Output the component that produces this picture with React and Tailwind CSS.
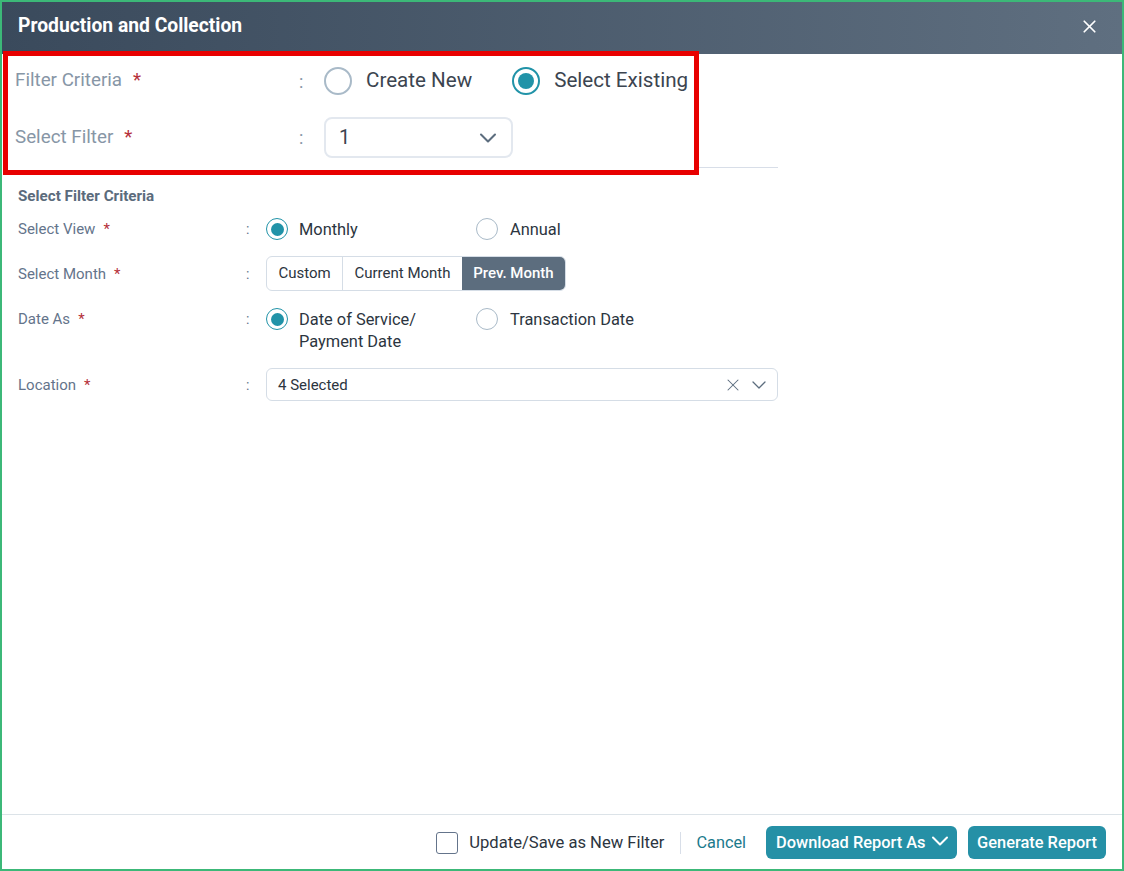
import React from 'react';
import { X, ChevronDown } from 'lucide-react';

const Radio = ({ checked, large }) => (
    <span
        className={`flex shrink-0 items-center justify-center rounded-full bg-white ${large ? 'h-[28px] w-[28px] border-2' : 'h-[22px] w-[22px] border-[1.5px]'} ${checked ? 'border-[#2193a8]' : 'border-[#a9bac8]'}`}
    >
        {checked && <span className={`rounded-full bg-[#2193a8] ${large ? 'h-[16px] w-[16px]' : 'h-[13px] w-[13px]'}`} />}
    </span>
);

const Required = ({ label, className, gap = 'ml-2' }) => (
    <span className={className}>
        {label}
        <span className={`${gap} text-[#b5303a]`}>*</span>
    </span>
);

const FormRow = ({ label, top = 'pt-0', children, className }) => (
    <div className={`flex ${className}`}>
        <Required label={label} className={`w-[228px] shrink-0 text-[15px] leading-[22px] text-[#64748b] ${top}`} />
        <span className={`w-[20px] shrink-0 text-[14px] leading-[22px] text-[#64748b] ${top}`}>:</span>
        {children}
    </div>
);

const RadioOption = ({ label, checked, className, gap = 'gap-[11px]' }) => (
    <div className={`flex items-start ${gap} ${className}`}>
        <Radio checked={checked} />
        <span className="pt-[1px] text-[16.4px] leading-[22px] text-[#2c3540]">{label}</span>
    </div>
);

const App = () => {
    return (
        <div className="relative flex h-[871px] w-[1124px] flex-col overflow-hidden border-2 border-[#3cb878] bg-white font-['Roboto',sans-serif]">
            <div className="flex h-[52px] shrink-0 items-center justify-between bg-linear-to-r from-[#3a4a5c] to-[#5f6f80] pb-[4px] pl-4 pr-[22px]">
                <h1 className="text-[19.3px] font-bold text-white">Production and Collection</h1>
                <X size={21} strokeWidth={2} className="text-white" />
            </div>

            <div className="flex-1 pl-4">
                <div className="mt-[113px] w-[760px] border-t border-[#d8dee8] pt-[18px]">
                    <h2 className="text-[15.2px] font-bold leading-[20px] text-[#5b6b7c]">Select Filter Criteria</h2>

                    <FormRow label="Select View" className="mt-[12px] h-[22px]">
                        <RadioOption label="Monthly" checked className="w-[210px]" />
                        <RadioOption label="Annual" gap="gap-[12px]" />
                    </FormRow>

                    <FormRow label="Select Month" top="pt-[7px]" className="mt-[16px]">
                        <div className="flex h-[35px] overflow-hidden rounded-md border border-[#d5dde6] text-[15px]">
                            <span className="flex w-[76px] items-center justify-center border-r border-[#d5dde6] text-[#2c3540]">Custom</span>
                            <span className="flex w-[119px] items-center justify-center text-[#2c3540]">Current Month</span>
                            <span className="flex w-[103px] items-center justify-center bg-[#5c6d7e] font-medium text-white">Prev. Month</span>
                        </div>
                    </FormRow>

                    <FormRow label="Date As" className="mt-[17px]">
                        <RadioOption label={<>Date of Service/<br />Payment Date</>} checked className="w-[210px]" />
                        <RadioOption label="Transaction Date" gap="gap-[12px]" />
                    </FormRow>

                    <FormRow label="Location" top="pt-[6px]" className="mt-[15px]">
                        <div className="flex h-[33px] flex-1 items-center justify-between rounded-md border border-[#d5dde6] pl-[11px] pr-[6px] text-[15px] text-[#2c3540]">
                            <span className="pt-[1px]">4 Selected</span>
                            <div className="flex items-center gap-[4px] text-[#5c6d7e]">
                                <X size={20} strokeWidth={1.25} />
                                <ChevronDown size={24} strokeWidth={1.25} />
                            </div>
                        </div>
                    </FormRow>
                </div>
            </div>

            <div className="flex h-[55px] shrink-0 items-center justify-end border-t border-[#dce3e8] pr-4">
                <span className="mt-[2px] h-[22px] w-[22px] rounded-[3px] border border-[#64748b]" />
                <span className="ml-[11px] pt-[3px] text-[16.6px] text-[#2c3540]">Update/Save as New Filter</span>
                <span className="ml-4 mt-[2px] h-[22px] border-l border-[#d8dee8]" />
                <span className="ml-[15px] pt-[3px] text-[16.3px] text-[#1b7a8c]">Cancel</span>
                <button className="ml-5 flex h-[33px] w-[191px] items-center rounded-md bg-[#2590a6] pl-[10px] text-[16.4px] font-medium text-white">
                    <span className="pt-[2px]">Download Report As</span>
                    <ChevronDown size={28} strokeWidth={1.75} className="-mt-[3px]" />
                </button>
                <button className="ml-[11px] h-[33px] w-[138px] rounded-md bg-[#2590a6] pt-[2px] text-[16.4px] font-medium text-white">Generate Report</button>
            </div>

            {/* red callout that sits over the form */}
            <div className="absolute left-[1px] top-[49px] h-[124px] w-[696px] border-[5px] border-[#e80000] bg-white">
                <div className="flex h-[50px] items-center">
                    <Required label="Filter Criteria" gap="ml-[11px]" className="ml-[7px] w-[284px] pb-[2px] text-[18.8px] text-[#8796a6]" />
                    <span className="w-[25px] text-[18px] text-[#8796a6]">:</span>
                    <div className="flex items-center gap-[14px] pt-[1px]">
                        <Radio large />
                        <span className="pb-[2px] text-[20.6px] text-[#3c4550]">Create New</span>
                    </div>
                    <div className="ml-[40px] flex items-center gap-[14px] pt-[1px]">
                        <Radio large checked />
                        <span className="pb-[2px] text-[20.6px] text-[#3c4550]">Select Existing</span>
                    </div>
                </div>
                <div className="mt-[11px] flex items-center">
                    <Required label="Select Filter" gap="ml-[11px]" className="ml-[7px] w-[284px] text-[18.8px] text-[#8796a6]" />
                    <span className="w-[25px] text-[18px] text-[#8796a6]">:</span>
                    <div className="flex h-[41px] w-[189px] items-center justify-between rounded-lg border-2 border-[#e3e8ef] pl-[13px] pr-[9px] text-[20px] text-[#3c4550]">
                        <span className="pb-[1px]">1</span>
                        <ChevronDown size={28} strokeWidth={1.75} className="text-[#5c6d7e]" />
                    </div>
                </div>
            </div>
        </div>
    );
};

export default App;
